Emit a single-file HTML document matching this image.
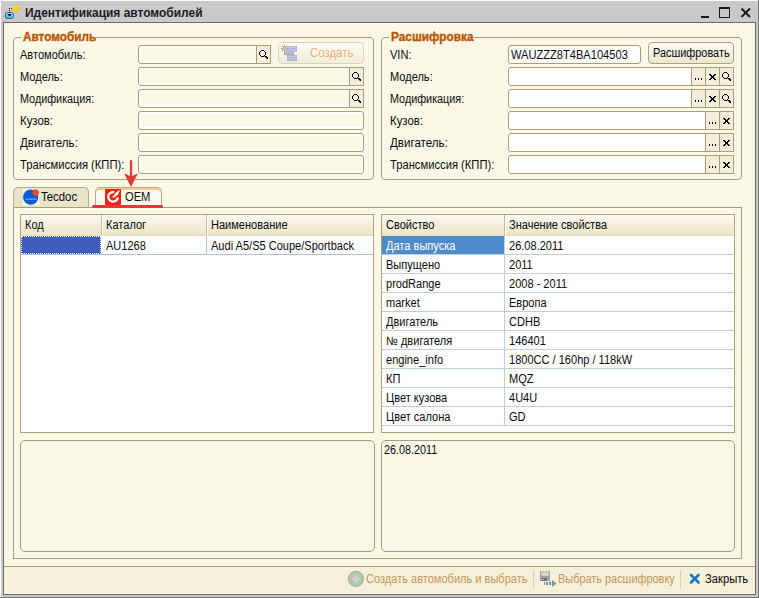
<!DOCTYPE html>
<html><head><meta charset="utf-8">
<style>
*{margin:0;padding:0;box-sizing:border-box}
html,body{width:759px;height:598px;overflow:hidden;background:#c9c9c9}
body{position:relative;font-family:"Liberation Sans",sans-serif;font-size:12px;color:#0a0a0a}
.a{position:absolute}
.t{position:absolute;white-space:nowrap;line-height:14px;transform-origin:0 0}
.gb{position:absolute;border:1px solid #a99f76;border-radius:4px}
.gt{position:absolute;white-space:nowrap;font-weight:bold;font-size:12px;color:#b95602;-webkit-text-stroke:0.35px #b95602;line-height:14px;transform-origin:0 0}
.fld{position:absolute;height:19px;border:1px solid #a99f76;border-radius:3px;background:#fbf8e7;box-shadow:inset 0 0 0 2px #fff}
.fw{position:absolute;height:19px;border:1px solid #a99f76;border-radius:3px;background:#fff}
.btn{position:absolute;width:15px;height:19px;border:1px solid #a99f76;background:#f3eedb}
</style></head><body>
<div class="a" style="left:0;top:0;width:759px;height:1px;background:#fcfcfc"></div>
<div class="a" style="left:0;top:0;width:1px;height:598px;background:#fcfcfc"></div>
<div class="a" style="left:758px;top:0;width:1px;height:598px;background:#777"></div>
<div class="a" style="left:0;top:597px;width:759px;height:1px;background:#777"></div>
<div class="a" style="left:3px;top:22px;width:753px;height:573px;border:1px solid #6b6b6b;background:#fbf8e7"></div>
<svg class="a" style="left:4px;top:4px" width="18" height="16" viewBox="0 0 18 16">
<defs><linearGradient id="bx" x1="0" y1="0" x2="0" y2="1"><stop offset="0" stop-color="#9be4ff"/><stop offset="1" stop-color="#4aa8d8"/></linearGradient></defs>
<rect x="1.5" y="8.5" width="8" height="6" rx="1.8" fill="url(#bx)" stroke="#2a6890" stroke-width="1"/>
<path d="M5 4h1v1h-1z M5 6h1v1h-1z M5 8h1v1h-1z M7 4h1v1h-1z M9 4h1v1h-1z" fill="#000" shape-rendering="crispEdges"/>
<path d="M3.3 10 L7.7 10 L5.5 12.6 Z" fill="#000"/>
<defs><linearGradient id="dm" x1="0" y1="0" x2="1" y2="1"><stop offset="0" stop-color="#fff4a0"/><stop offset="0.5" stop-color="#ffd800"/><stop offset="1" stop-color="#f8c000"/></linearGradient></defs><path d="M12 0.3 L16.1 4.6 L12 8.9 L7.9 4.6 Z" fill="url(#dm)" stroke="#e0a868" stroke-width="0.7"/>
</svg>
<div class="t" style="left:25px;top:6px;font-weight:bold;font-size:12px;transform:scaleX(0.996);color:#1c1c24">Идентификация автомобилей</div>
<div class="a" style="left:701px;top:16px;width:8px;height:2px;background:#1a1a1a"></div>
<div class="a" style="left:719px;top:7px;width:11px;height:11px;border:1px solid #1a1a1a;border-top-width:2px"></div>
<svg class="a" style="left:740px;top:7px" width="12" height="12" viewBox="0 0 12 12"><path d="M1.5 1.5 L10 10 M10 1.5 L1.5 10" stroke="#1a1a1a" stroke-width="2"/></svg>
<div class="gb" style="left:13px;top:37px;width:361px;height:143px"></div>
<div class="a" style="left:21px;top:36px;width:75px;height:3px;background:#fbf8e7"></div>
<div class="gt" style="left:23px;top:30px;transform:scaleX(0.98)">Автомобиль</div>
<div class="t" style="left:20px;top:48px;transform:scaleX(0.92);">Автомобиль:</div>
<div class="t" style="left:20px;top:70px;transform:scaleX(0.92);">Модель:</div>
<div class="t" style="left:20px;top:92px;transform:scaleX(0.9);">Модификация:</div>
<div class="t" style="left:20px;top:114px;transform:scaleX(0.95);">Кузов:</div>
<div class="t" style="left:20px;top:136px;transform:scaleX(0.965);">Двигатель:</div>
<div class="t" style="left:20px;top:158px;transform:scaleX(0.934);">Трансмиссия (КПП):</div>
<div class="gb" style="left:381px;top:37px;width:361px;height:143px"></div>
<div class="a" style="left:389px;top:36px;width:85px;height:3px;background:#fbf8e7"></div>
<div class="gt" style="left:391px;top:30px;transform:scaleX(0.985)">Расшифровка</div>
<div class="t" style="left:390px;top:48px;transform:scaleX(0.92);">VIN:</div>
<div class="t" style="left:390px;top:70px;transform:scaleX(0.92);">Модель:</div>
<div class="t" style="left:390px;top:92px;transform:scaleX(0.9);">Модификация:</div>
<div class="t" style="left:390px;top:114px;transform:scaleX(0.95);">Кузов:</div>
<div class="t" style="left:390px;top:136px;transform:scaleX(0.965);">Двигатель:</div>
<div class="t" style="left:390px;top:158px;transform:scaleX(0.934);">Трансмиссия (КПП):</div>
<div class="fld" style="left:138px;top:45px;width:133px;border-radius:3px 0 0 3px"></div><div class="btn" style="left:256px;top:45px"></div>
<div class="fld" style="left:138px;top:67px;width:226px;border-radius:3px 0 0 3px"></div><div class="btn" style="left:349px;top:67px"></div>
<div class="fld" style="left:138px;top:89px;width:226px;border-radius:3px 0 0 3px"></div><div class="btn" style="left:349px;top:89px"></div>
<div class="fld" style="left:138px;top:111px;width:226px"></div>
<div class="fld" style="left:138px;top:133px;width:226px"></div>
<div class="fld" style="left:138px;top:155px;width:226px"></div>
<div class="a" style="left:278px;top:42px;width:86px;height:22px;border:1px solid #d9d3b8;border-radius:4px;background:linear-gradient(#fdfcf5,#f1edd9)"></div>
<svg class="a" style="left:280px;top:44px" width="20" height="18" viewBox="0 0 20 18">
<rect x="7" y="2" width="10" height="5.7" fill="#b4b2dc"/>
<rect x="4" y="7.7" width="10" height="3" fill="#a8acc8"/><rect x="4" y="10" width="10" height="0.8" fill="#88a0a8"/>
<rect x="7" y="11" width="10" height="6" fill="#b4b2dc"/>
<path d="M8 3.5 H16 M8 6 H16 M5 9.2 H13 M8 12.5 H16 M8 15 H16" stroke="#d0d0c8" stroke-width="0.8"/>
<path d="M4.5 0.8 V8.2 M0.8 4.5 H8.2 M1.9 1.9 L7.1 7.1 M7.1 1.9 L1.9 7.1" stroke="#a8a490" stroke-width="1.1"/>
<circle cx="4.5" cy="4.5" r="1.8" fill="#b4b0a0"/><circle cx="4.5" cy="4.5" r="0.8" fill="#d8d8e8"/>
</svg>
<div class="t" style="left:310px;top:46px;transform:scaleX(0.95);color:#efac7a">Создать</div>
<div class="fw" style="left:508px;top:45px;width:133px"></div>
<div class="t" style="left:511px;top:48px;transform:scaleX(0.925);color:#0c0c0c">WAUZZZ8T4BA104503</div>
<div class="a" style="left:648px;top:42px;width:86px;height:22px;border:1px solid #aca37e;border-radius:4px;background:linear-gradient(#fdfdf8,#ece6cf)"></div>
<div class="t" style="left:653px;top:46px;transform:scaleX(0.91);">Расшифровать</div>
<div class="fw" style="left:508px;top:67px;width:184px;border-radius:3px 0 0 3px"></div><div class="btn" style="left:691px;top:67px"></div><div class="btn" style="left:705px;top:67px"></div><div class="btn" style="left:719px;top:67px"></div>
<div class="fw" style="left:508px;top:89px;width:184px;border-radius:3px 0 0 3px"></div><div class="btn" style="left:691px;top:89px"></div><div class="btn" style="left:705px;top:89px"></div><div class="btn" style="left:719px;top:89px"></div>
<div class="fw" style="left:508px;top:111px;width:198px;border-radius:3px 0 0 3px"></div><div class="btn" style="left:705px;top:111px"></div><div class="btn" style="left:719px;top:111px"></div>
<div class="fw" style="left:508px;top:133px;width:198px;border-radius:3px 0 0 3px"></div><div class="btn" style="left:705px;top:133px"></div><div class="btn" style="left:719px;top:133px"></div>
<div class="fw" style="left:508px;top:155px;width:198px;border-radius:3px 0 0 3px"></div><div class="btn" style="left:705px;top:155px"></div><div class="btn" style="left:719px;top:155px"></div>
<svg class="a" style="left:256px;top:45px" width="15" height="19" viewBox="0 0 15 19" shape-rendering="crispEdges"><path d="M5 5h3v1h-3z M4 6h1v1h-1z M8 6h1v1h-1z M3 7h1v3h-1z M9 7h1v3h-1z M4 10h1v1h-1z M8 10h1v1h-1z M5 11h3v1h-3z M9 11h1v1h-1z M10 11h1v2h-1z M11 12h1v2h-1z" fill="#000"/><path d="M8 11h1v1h-1z M9 12h1v1h-1z M10 13h1v1h-1z" fill="#000" fill-opacity="0.45"/></svg>
<svg class="a" style="left:349px;top:67px" width="15" height="19" viewBox="0 0 15 19" shape-rendering="crispEdges"><path d="M5 5h3v1h-3z M4 6h1v1h-1z M8 6h1v1h-1z M3 7h1v3h-1z M9 7h1v3h-1z M4 10h1v1h-1z M8 10h1v1h-1z M5 11h3v1h-3z M9 11h1v1h-1z M10 11h1v2h-1z M11 12h1v2h-1z" fill="#000"/><path d="M8 11h1v1h-1z M9 12h1v1h-1z M10 13h1v1h-1z" fill="#000" fill-opacity="0.45"/></svg>
<svg class="a" style="left:349px;top:89px" width="15" height="19" viewBox="0 0 15 19" shape-rendering="crispEdges"><path d="M5 5h3v1h-3z M4 6h1v1h-1z M8 6h1v1h-1z M3 7h1v3h-1z M9 7h1v3h-1z M4 10h1v1h-1z M8 10h1v1h-1z M5 11h3v1h-3z M9 11h1v1h-1z M10 11h1v2h-1z M11 12h1v2h-1z" fill="#000"/><path d="M8 11h1v1h-1z M9 12h1v1h-1z M10 13h1v1h-1z" fill="#000" fill-opacity="0.45"/></svg>
<svg class="a" style="left:719px;top:67px" width="15" height="19" viewBox="0 0 15 19" shape-rendering="crispEdges"><path d="M5 5h3v1h-3z M4 6h1v1h-1z M8 6h1v1h-1z M3 7h1v3h-1z M9 7h1v3h-1z M4 10h1v1h-1z M8 10h1v1h-1z M5 11h3v1h-3z M9 11h1v1h-1z M10 11h1v2h-1z M11 12h1v2h-1z" fill="#000"/><path d="M8 11h1v1h-1z M9 12h1v1h-1z M10 13h1v1h-1z" fill="#000" fill-opacity="0.45"/></svg>
<svg class="a" style="left:719px;top:89px" width="15" height="19" viewBox="0 0 15 19" shape-rendering="crispEdges"><path d="M5 5h3v1h-3z M4 6h1v1h-1z M8 6h1v1h-1z M3 7h1v3h-1z M9 7h1v3h-1z M4 10h1v1h-1z M8 10h1v1h-1z M5 11h3v1h-3z M9 11h1v1h-1z M10 11h1v2h-1z M11 12h1v2h-1z" fill="#000"/><path d="M8 11h1v1h-1z M9 12h1v1h-1z M10 13h1v1h-1z" fill="#000" fill-opacity="0.45"/></svg>
<svg class="a" style="left:691px;top:67px" width="15" height="19" viewBox="0 0 15 19" shape-rendering="crispEdges"><path d="M4 11h1v2h-1z M7 11h1v2h-1z M10 11h1v2h-1z" fill="#000"/></svg>
<svg class="a" style="left:705px;top:67px" width="15" height="19" viewBox="0 0 15 19" shape-rendering="crispEdges"><path d="M4 7h2v1h-2z M9 7h2v1h-2z M5 8h2v1h-2z M8 8h2v1h-2z M6 9h3v2h-3z M5 11h2v1h-2z M8 11h2v1h-2z M4 12h2v1h-2z M9 12h2v1h-2z" fill="#000"/></svg>
<svg class="a" style="left:691px;top:89px" width="15" height="19" viewBox="0 0 15 19" shape-rendering="crispEdges"><path d="M4 11h1v2h-1z M7 11h1v2h-1z M10 11h1v2h-1z" fill="#000"/></svg>
<svg class="a" style="left:705px;top:89px" width="15" height="19" viewBox="0 0 15 19" shape-rendering="crispEdges"><path d="M4 7h2v1h-2z M9 7h2v1h-2z M5 8h2v1h-2z M8 8h2v1h-2z M6 9h3v2h-3z M5 11h2v1h-2z M8 11h2v1h-2z M4 12h2v1h-2z M9 12h2v1h-2z" fill="#000"/></svg>
<svg class="a" style="left:705px;top:111px" width="15" height="19" viewBox="0 0 15 19" shape-rendering="crispEdges"><path d="M4 11h1v2h-1z M7 11h1v2h-1z M10 11h1v2h-1z" fill="#000"/></svg>
<svg class="a" style="left:719px;top:111px" width="15" height="19" viewBox="0 0 15 19" shape-rendering="crispEdges"><path d="M4 7h2v1h-2z M9 7h2v1h-2z M5 8h2v1h-2z M8 8h2v1h-2z M6 9h3v2h-3z M5 11h2v1h-2z M8 11h2v1h-2z M4 12h2v1h-2z M9 12h2v1h-2z" fill="#000"/></svg>
<svg class="a" style="left:705px;top:133px" width="15" height="19" viewBox="0 0 15 19" shape-rendering="crispEdges"><path d="M4 11h1v2h-1z M7 11h1v2h-1z M10 11h1v2h-1z" fill="#000"/></svg>
<svg class="a" style="left:719px;top:133px" width="15" height="19" viewBox="0 0 15 19" shape-rendering="crispEdges"><path d="M4 7h2v1h-2z M9 7h2v1h-2z M5 8h2v1h-2z M8 8h2v1h-2z M6 9h3v2h-3z M5 11h2v1h-2z M8 11h2v1h-2z M4 12h2v1h-2z M9 12h2v1h-2z" fill="#000"/></svg>
<svg class="a" style="left:705px;top:155px" width="15" height="19" viewBox="0 0 15 19" shape-rendering="crispEdges"><path d="M4 11h1v2h-1z M7 11h1v2h-1z M10 11h1v2h-1z" fill="#000"/></svg>
<svg class="a" style="left:719px;top:155px" width="15" height="19" viewBox="0 0 15 19" shape-rendering="crispEdges"><path d="M4 7h2v1h-2z M9 7h2v1h-2z M5 8h2v1h-2z M8 8h2v1h-2z M6 9h3v2h-3z M5 11h2v1h-2z M8 11h2v1h-2z M4 12h2v1h-2z M9 12h2v1h-2z" fill="#000"/></svg>
<div class="a" style="left:13px;top:207px;width:729px;height:352px;border:1px solid #a99f76"></div>
<div class="a" style="left:13px;top:187px;width:76px;height:20px;border:1px solid #b6ad88;border-bottom:none;border-radius:5px 5px 0 0;background:#e9e3c9"></div>
<div class="a" style="left:95px;top:187px;width:67px;height:21px;border:1px solid #b6ad88;border-bottom:none;border-radius:5px 5px 0 0;background:#fcfaee;box-shadow:inset 0 2px 0 #f8cc8c"></div>
<svg class="a" style="left:23px;top:189px" width="16" height="16" viewBox="0 0 16 16">
<rect width="16" height="16" fill="#fff"/>
<circle cx="7.7" cy="8.1" r="7.7" fill="#0b5bd6"/>
<circle cx="12.7" cy="3.5" r="3.2" fill="#ff4b1f"/>
<path d="M2.6 10.3 H13.4" stroke="#8fb2ee" stroke-width="1.6" stroke-dasharray="1.2 0.5"/>
</svg>
<svg class="a" style="left:105px;top:189px" width="16" height="16" viewBox="0 0 16 16">
<rect width="16" height="16" rx="1" fill="#f2220e"/>
<path d="M9.1 3.2 A4.8 4.8 0 1 0 12.8 8.3" fill="none" stroke="#fff" stroke-width="2.3"/>
<path d="M7.4 8.3 L10.8 3.4 L15 0.9 L13.2 5.4 L8.4 9.1 Z" fill="#fff"/>
</svg>
<svg class="a" style="left:120px;top:158px" width="22" height="32" viewBox="0 0 22 32"><path d="M11 3 V20" stroke="#e03a36" stroke-width="2.2" stroke-linecap="round"/><path d="M4 15.2 L11 18.6 L18 15.2 L11 29 Z" fill="#e03a36"/></svg>
<div class="a" style="left:92px;top:205px;width:71px;height:3px;border-radius:2px;background:#e03a36"></div>
<div class="t" style="left:41px;top:190px;transform:scaleX(0.95);">Tecdoc</div>
<div class="t" style="left:125px;top:190px;transform:scaleX(0.93);">OEM</div>
<div class="a" style="left:20px;top:214px;width:354px;height:219px;border:1px solid #aca37e;background:#fff"></div>
<div class="a" style="left:381px;top:214px;width:354px;height:219px;border:1px solid #aca37e;background:#fff"></div>
<div class="a" style="left:21px;top:215px;width:352px;height:21px;background:linear-gradient(#fbfaf2,#ede5c8);border-bottom:1px solid #e4dcbc"></div>
<div class="a" style="left:101px;top:215px;width:1px;height:20px;background:#c4bb98"></div><div class="a" style="left:102px;top:215px;width:1px;height:20px;background:#fff"></div>
<div class="a" style="left:206px;top:215px;width:1px;height:20px;background:#c4bb98"></div><div class="a" style="left:207px;top:215px;width:1px;height:20px;background:#fff"></div>
<div class="t" style="left:25px;top:218px;transform:scaleX(0.92);">Код</div>
<div class="t" style="left:106px;top:218px;transform:scaleX(0.92);">Каталог</div>
<div class="t" style="left:211px;top:218px;transform:scaleX(0.92);">Наименование</div>
<div class="a" style="left:21px;top:254px;width:352px;height:1px;background:#a9c4e4"></div>
<div class="a" style="left:206px;top:236px;width:1px;height:18px;background:#a9c4e4"></div>
<div class="a" style="left:21px;top:236px;width:80px;height:18px;background:#3d5cbb;border:1px dotted #fff"></div>
<div class="t" style="left:106px;top:239px;transform:scaleX(0.92);">AU1268</div>
<div class="t" style="left:211px;top:239px;transform:scaleX(0.92);">Audi A5/S5 Coupe/Sportback</div>
<div class="a" style="left:382px;top:215px;width:352px;height:21px;background:linear-gradient(#fbfaf2,#ede5c8);border-bottom:1px solid #e4dcbc"></div>
<div class="a" style="left:504px;top:215px;width:1px;height:20px;background:#c4bb98"></div><div class="a" style="left:505px;top:215px;width:1px;height:20px;background:#fff"></div>
<div class="t" style="left:386px;top:218px;transform:scaleX(0.92);">Свойство</div>
<div class="t" style="left:509px;top:218px;transform:scaleX(0.92);">Значение свойства</div>
<div class="a" style="left:504px;top:236px;width:1px;height:190px;background:#bfcfdc"></div>
<div class="a" style="left:382px;top:236px;width:122px;height:18px;background:#4f8bca"></div>
<div class="a" style="left:382px;top:254px;width:352px;height:1px;background:#bfcfdc"></div>
<div class="t" style="left:386px;top:239px;transform:scaleX(0.92);color:#fff">Дата выпуска</div>
<div class="t" style="left:509px;top:239px;transform:scaleX(0.92);">26.08.2011</div>
<div class="a" style="left:382px;top:273px;width:352px;height:1px;background:#bfcfdc"></div>
<div class="t" style="left:386px;top:258px;transform:scaleX(0.92);">Выпущено</div>
<div class="t" style="left:509px;top:258px;transform:scaleX(0.92);">2011</div>
<div class="a" style="left:382px;top:292px;width:352px;height:1px;background:#bfcfdc"></div>
<div class="t" style="left:386px;top:277px;transform:scaleX(0.92);">prodRange</div>
<div class="t" style="left:509px;top:277px;transform:scaleX(0.92);">2008 - 2011</div>
<div class="a" style="left:382px;top:311px;width:352px;height:1px;background:#bfcfdc"></div>
<div class="t" style="left:386px;top:296px;transform:scaleX(0.92);">market</div>
<div class="t" style="left:509px;top:296px;transform:scaleX(0.92);">Европа</div>
<div class="a" style="left:382px;top:330px;width:352px;height:1px;background:#bfcfdc"></div>
<div class="t" style="left:386px;top:315px;transform:scaleX(0.92);">Двигатель</div>
<div class="t" style="left:509px;top:315px;transform:scaleX(0.92);">CDHB</div>
<div class="a" style="left:382px;top:349px;width:352px;height:1px;background:#bfcfdc"></div>
<div class="t" style="left:386px;top:334px;transform:scaleX(0.92);">№ двигателя</div>
<div class="t" style="left:509px;top:334px;transform:scaleX(0.92);">146401</div>
<div class="a" style="left:382px;top:368px;width:352px;height:1px;background:#bfcfdc"></div>
<div class="t" style="left:386px;top:353px;transform:scaleX(0.92);">engine_info</div>
<div class="t" style="left:509px;top:353px;transform:scaleX(0.92);">1800CC / 160hp / 118kW</div>
<div class="a" style="left:382px;top:387px;width:352px;height:1px;background:#bfcfdc"></div>
<div class="t" style="left:386px;top:372px;transform:scaleX(0.92);">КП</div>
<div class="t" style="left:509px;top:372px;transform:scaleX(0.92);">MQZ</div>
<div class="a" style="left:382px;top:406px;width:352px;height:1px;background:#bfcfdc"></div>
<div class="t" style="left:386px;top:391px;transform:scaleX(0.92);">Цвет кузова</div>
<div class="t" style="left:509px;top:391px;transform:scaleX(0.92);">4U4U</div>
<div class="a" style="left:382px;top:425px;width:352px;height:1px;background:#bfcfdc"></div>
<div class="t" style="left:386px;top:410px;transform:scaleX(0.92);">Цвет салона</div>
<div class="t" style="left:509px;top:410px;transform:scaleX(0.92);">GD</div>
<div class="a" style="left:20px;top:440px;width:355px;height:112px;border:1px solid #a99f76;border-radius:5px;background:#fbf8e7"></div>
<div class="a" style="left:381px;top:440px;width:354px;height:112px;border:1px solid #a99f76;border-radius:5px;background:#fbf8e7"></div>
<div class="t" style="left:384px;top:443px;transform:scaleX(0.9);">26.08.2011</div>
<div class="a" style="left:4px;top:566px;width:751px;height:28px;border-top:1px solid #a99f76;background:#f5f0d9"></div>
<div class="t" style="left:366px;top:572px;transform:scaleX(0.92);color:#c4965a">Создать автомобиль и выбрать</div>
<div class="a" style="left:533px;top:570px;width:1px;height:19px;background:#d8d0b4"></div>
<div class="t" style="left:558px;top:572px;transform:scaleX(0.91);color:#c4965a">Выбрать расшифровку</div>
<div class="a" style="left:680px;top:570px;width:1px;height:19px;background:#d8d0b4"></div>
<div class="t" style="left:705px;top:572px;transform:scaleX(0.935);">Закрыть</div>
<svg class="a" style="left:347px;top:570px" width="18" height="18" viewBox="0 0 18 18">
<circle cx="8.9" cy="8.9" r="7.6" fill="#b3c6ae" stroke="#9da3a0" stroke-width="0.9"/>
<path d="M9 5.2 V12.6 M5.3 8.9 H12.7" stroke="#d3d3d0" stroke-width="2.6"/>
</svg>
<svg class="a" style="left:540px;top:571px" width="18" height="17" viewBox="0 0 18 17">
<rect x="0" y="0" width="10" height="10" fill="#a3a3a3"/>
<rect x="1" y="0" width="8" height="5" fill="#c4c8b0"/>
<rect x="2" y="1.5" width="6" height="3" fill="#d9d9d9"/>
<rect x="2" y="7" width="5" height="3" fill="#727272"/>
<rect x="3" y="8" width="1" height="1" fill="#ddd"/>
<rect x="4" y="11" width="1" height="3" fill="#7b94ad"/>
<rect x="6" y="11" width="2" height="3" fill="#7b94ad"/>
<rect x="9" y="11" width="2" height="3" fill="#7b94ad"/>
<path d="M12 9 L16.5 12.5 L12 16 Z" fill="#7b94ad"/>
</svg>
<svg class="a" style="left:689px;top:573px" width="12" height="12" viewBox="0 0 12 12">
<path d="M2 2 L9.5 9.5 M9.5 2 L2 9.5" stroke="#1b78b6" stroke-width="2.6" stroke-linecap="round"/>
</svg>
</body></html>
